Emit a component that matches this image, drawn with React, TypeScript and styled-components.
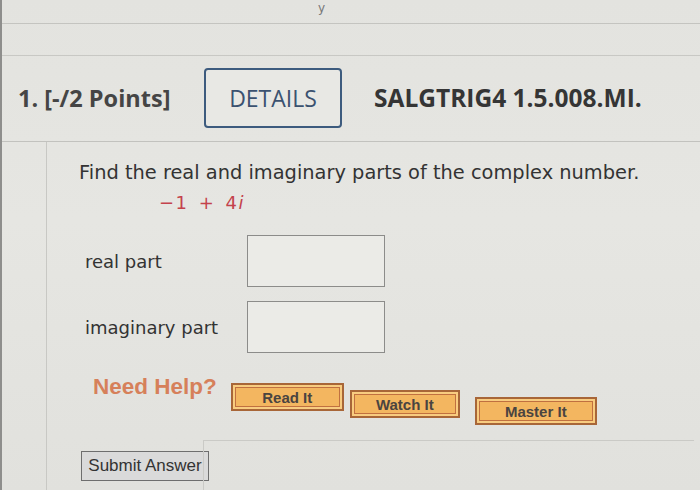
import styled, { createGlobalStyle } from "styled-components";

const Global = createGlobalStyle`
  html, body {
    margin: 0;
    padding: 0;
    background: #e2e2de;
  }
  * { box-sizing: border-box; }
`;

const Page = styled.div`
  width: 700px;
  height: 490px;
  overflow: hidden;
  background: linear-gradient(180deg, #e3e3df 0%, #e6e6e2 45%, #e1e1dd 100%);
  border-left: 2px solid #8e8e8c;
  display: flex;
  flex-direction: column;
`;

const TopBand = styled.div`
  height: 24px;
  border-bottom: 1px solid #c4c4c0;
  position: relative;
`;

const Fragment = styled.span`
  position: absolute;
  left: 316px;
  top: 1px;
  font-family: "DejaVu Sans", sans-serif;
  font-size: 12px;
  line-height: 14px;
  color: #777;
`;

const SpacerBand = styled.div`
  height: 32px;
  border-bottom: 1px solid #c8c8c4;
`;

const Header = styled.div`
  height: 86px;
  display: flex;
  align-items: center;
  padding-left: 16px;
  padding-bottom: 2px;
  border-bottom: 1px solid #c2c2be;
  font-family: "Open Sans", sans-serif;
`;

const Points = styled.div`
  font-size: 23.5px;
  font-weight: 700;
  color: #454545;
  width: 186px;
`;

const Details = styled.div`
  width: 138px;
  height: 60px;
  border: 2px solid #3d5b7e;
  border-radius: 4px;
  display: flex;
  align-items: center;
  justify-content: center;
  font-size: 23px;
  color: #3b5270;
  background: #e8e8e4;
  margin-right: 32px;
`;

const Code = styled.div`
  font-size: 24.5px;
  font-weight: 700;
  color: #353535;
`;

const Body = styled.div`
  flex: 1;
  margin-left: 44px;
  border-left: 1px solid #c8c8c4;
  padding: 19px 0 0 32px;
  display: flex;
  flex-direction: column;
`;

const Question = styled.div`
  font-family: "DejaVu Sans", sans-serif;
  font-size: 19.4px;
  color: #333;
`;

const Expr = styled.div`
  font-family: "DejaVu Sans", sans-serif;
  font-size: 18px;
  letter-spacing: 1.5px;
  word-spacing: 3px;
  color: #c4424c;
  margin: 8px 0 0 80px;
  i { font-style: italic; }
`;

const Form = styled.div`
  display: grid;
  grid-template-columns: 162px 138px;
  row-gap: 14px;
  align-items: center;
  margin: 22px 0 0 6px;
`;

const Label = styled.div`
  font-family: "DejaVu Sans", sans-serif;
  font-size: 18px;
  color: #333;
`;

const Field = styled.input`
  width: 138px;
  height: 52px;
  border: 1px solid #8c8c8a;
  background: #ebebe7;
  outline: none;
`;

const Help = styled.div`
  display: flex;
  align-items: center;
  margin: 20px 0 0 14px;
  font-family: "Liberation Sans", Arial, sans-serif;
`;

const HelpLabel = styled.span`
  font-size: 22.5px;
  font-weight: 700;
  color: #d6805a;
  margin-right: 14px;
`;

const HelpButton = styled.button<{ $w: number; $dy: number; $gap: number }>`
  width: ${(p) => p.$w}px;
  height: 28px;
  margin-right: ${(p) => p.$gap}px;
  transform: translateY(${(p) => p.$dy}px);
  background: #f3b660;
  border: 2px solid #a86638;
  box-shadow: inset 0 0 0 2px #f8cc80, inset 0 0 0 3px #c07040;
  font-family: "Liberation Sans", Arial, sans-serif;
  font-size: 15px;
  font-weight: 700;
  color: #4a4440;
  padding: 0;
`;

const Bottom = styled.div`
  display: flex;
  align-items: flex-end;
  flex: 1;
`;

const Submit = styled.button`
  width: 128px;
  height: 30px;
  margin: 0 0 9px 2px;
  background: #dadada;
  border: 1px solid #6e6e6e;
  font-family: "Liberation Sans", Arial, sans-serif;
  font-size: 17px;
  color: #333;
  padding: 0;
`;

const Feedback = styled.div`
  flex: 1;
  height: 50px;
  border-top: 1px solid #cacac6;
  border-left: 1px solid #cacac6;
  transform: translateX(-6px);
`;

export default function App() {
  return (
    <>
      <Global />
      <Page>
        <TopBand>
          <Fragment>y</Fragment>
        </TopBand>
        <SpacerBand />
        <Header>
          <Points>1. [-/2 Points]</Points>
          <Details>DETAILS</Details>
          <Code>SALGTRIG4 1.5.008.MI.</Code>
        </Header>
        <Body>
          <Question>Find the real and imaginary parts of the complex number.</Question>
          <Expr>
            −1 + 4<i>i</i>
          </Expr>
          <Form>
            <Label>real part</Label>
            <Field />
            <Label>imaginary part</Label>
            <Field />
          </Form>
          <Help>
            <HelpLabel>Need Help?</HelpLabel>
            <HelpButton $w={113} $dy={10} $gap={6}>Read It</HelpButton>
            <HelpButton $w={110} $dy={17} $gap={15}>Watch It</HelpButton>
            <HelpButton $w={122} $dy={24} $gap={0}>Master It</HelpButton>
          </Help>
          <Bottom>
            <Submit>Submit Answer</Submit>
            <Feedback />
          </Bottom>
        </Body>
      </Page>
    </>
  );
}
